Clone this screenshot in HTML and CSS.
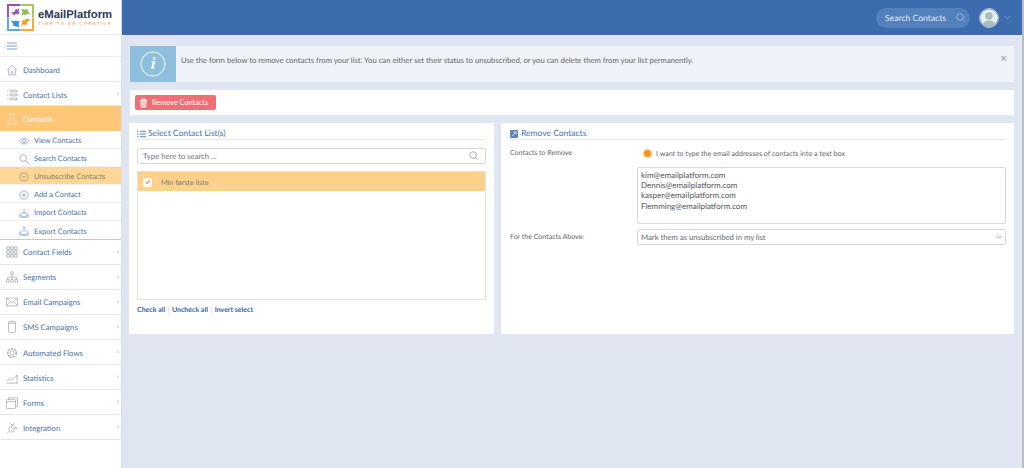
FILE: index.html
```html
<!DOCTYPE html>
<html lang="en">
<head>
<meta charset="utf-8">
<title>eMailPlatform - Remove Contacts</title>
<link rel="stylesheet" href="styles.css">
</head>
<body>
<div class="app">
  <aside class="sidebar">
    <div class="logo">
      <div class="logo-mark">
        <svg viewBox="0 0 28 28" width="27" height="27">
          <path d="M14 1H1V14" fill="none" stroke="#a04fb0" stroke-width="2"/>
          <path d="M14 1H27V14" fill="none" stroke="#9ccc5a" stroke-width="2"/>
          <path d="M1 14V27H14" fill="none" stroke="#5aa6e0" stroke-width="2"/>
          <path d="M27 14V27H14" fill="none" stroke="#f7a73c" stroke-width="2"/>
          <path d="M4 9l4-1 1-3 2 1 2-2-1 4 1 3-4-1-2 2-1-2z" fill="#a04fb0"/>
          <path d="M24 11l-4-1-1 2-2-1-2 1 1-4-1-3 4 1 2-1 1 3z" fill="#8cc152"/>
          <path d="M4 17l4 1 1-1 2 1 2-1-1 4 1 3-4-1-2 0-1-3z" fill="#3f8fd2"/>
          <path d="M24 16l-3 3-1 3-3-1-3 3 2-5-1-2 3 0 2-2z" fill="#f39a2d"/>
        </svg>
      </div>
      <div class="logo-text">
        <div class="logo-name">eMailPlatform</div>
        <div class="logo-tag">TIME TO BE CREATIVE</div>
      </div>
    </div>
    <div class="toggle">
      <svg viewBox="0 0 14 8" width="14" height="8"><path d="M3 1h10M3 4h10M3 7h10" stroke="#a9c1e2" stroke-width="1.400" fill="none"/><path d="M1.500 2.500L.2 4l1.300 1.500" stroke="#cfd8e6" stroke-width=".6" fill="none"/></svg>
    </div>
    <nav>
      <a class="nav-item lowered"><svg class="ni" viewBox="0 0 14 14"><path d="M1 7l6-5.500 6 5.500M3 6v7h3V9h2v4h3V6"/></svg><span>Dashboard</span></a>
      <a class="nav-item short lowered"><svg class="ni" viewBox="0 0 14 14"><path d="M1 2.500h2M1 7h2M1 11.500h2M5 1.500h8v2H5zM5 6h8v2H5zM5 10.500h8v2H5z"/></svg><span>Contact Lists</span><i class="chev">›</i></a>
      <a class="nav-item active lowered"><svg class="ni" viewBox="0 0 14 14"><path d="M5 7C3 3 5 1 7 1s4 2 2 6v1.500l4 2V13H1v-2.500l4-2z"/></svg><span>Contacts</span><svg class="chev-d" viewBox="0 0 6 4"><path d="M.5.5L3 3 5.500.5"/></svg></a>
      <div class="subnav">
        <a class="sub-item"><svg class="si" viewBox="0 0 12 12"><path d="M.5 6C2 3.500 4 2.500 6 2.500S10 3.500 11.500 6C10 8.500 8 9.500 6 9.500S2 8.500.5 6z"/><circle cx="6" cy="6" r="2"/></svg><span>View Contacts</span></a>
        <a class="sub-item"><svg class="si" viewBox="0 0 12 12"><circle cx="5" cy="5" r="4"/><path d="M8 8l3.500 3.500"/></svg><span>Search Contacts</span></a>
        <a class="sub-item current"><svg class="si" viewBox="0 0 12 12"><circle cx="6" cy="6" r="5"/><path d="M3.500 6h5"/></svg><span>Unsubscribe Contacts</span></a>
        <a class="sub-item"><svg class="si" viewBox="0 0 12 12"><circle cx="6" cy="6" r="5"/><path d="M3.500 6h5M6 3.500v5"/></svg><span>Add a Contact</span></a>
        <a class="sub-item"><svg class="si" viewBox="0 0 12 12"><path d="M3.500 5L1 8v3h10V8L8.500 5M1 8l5 3 5-3M6 1v6M4 5l2 2 2-2"/></svg><span>Import Contacts</span></a>
        <a class="sub-item"><svg class="si" viewBox="0 0 12 12"><path d="M3.500 5L1 8v3h10V8L8.500 5M1 8l5 3 5-3M6 7V1M4 3l2-2 2 2"/></svg><span>Export Contacts</span></a>
      </div>
      <a class="nav-item"><svg class="ni" viewBox="0 0 14 14"><path d="M1 1h3v3H1zM5.500 1h3v3h-3zM10 1h3v3h-3zM1 5.500h3v3H1zM5.500 5.500h3v3h-3zM10 5.500h3v3h-3zM1 10h3v3H1zM5.500 10h3v3h-3zM10 10h3v3h-3z"/></svg><span>Contact Fields</span><i class="chev">›</i></a>
      <a class="nav-item"><svg class="ni" viewBox="0 0 14 14"><path d="M5.500 1h3v3h-3zM7 4v3M2 10V7h10v3M7 7v3M.5 10h3v3h-3zM5.500 10h3v3h-3zM10.500 10h3v3h-3z"/></svg><span>Segments</span><i class="chev">›</i></a>
      <a class="nav-item"><svg class="ni" viewBox="0 0 14 14"><path d="M.5 2.500h13v9H.5zM.5 2.500L7 8l6.500-5.500M.5 11.500L5 6.500M13.500 11.500L9 6.500"/></svg><span>Email Campaigns</span><i class="chev">›</i></a>
      <a class="nav-item"><svg class="ni" viewBox="0 0 14 14"><rect x="3" y=".5" width="8" height="13" rx="1.500"/><path d="M3 2.500h8"/></svg><span>SMS Campaigns</span><i class="chev">›</i></a>
      <a class="nav-item lowered"><svg class="ni" viewBox="0 0 14 14"><circle cx="7" cy="7" r="2.500"/><circle cx="7" cy="7" r="5" stroke-dasharray="2.500 1.100" stroke-width="1.500"/></svg><span>Automated Flows</span><i class="chev">›</i></a>
      <a class="nav-item lowered"><svg class="ni" viewBox="0 0 14 14"><path d="M.5 13h13M1 11l3-3 2.500 1.500L13 4v9M13 4l-2 .5M13 4v2"/></svg><span>Statistics</span><i class="chev">›</i></a>
      <a class="nav-item lowered"><svg class="ni" viewBox="0 0 14 14"><rect x=".5" y="3" width="10.500" height="10.500" rx="1"/><path d="M3 3V1h10.500v10H11M.5 5.500H11"/></svg><span>Forms</span><i class="chev">›</i></a>
      <a class="nav-item lowered"><svg class="ni" viewBox="0 0 14 14"><path d="M1 13.500l3.500-3.500M5 5l5 5-2 1.500C6 12 4 11 3.500 9S3.500 6 5 5zM8 3L6 6M12 6l-3 2M9 1.500L7 5M10 8l3.500-1M4 1l5 4M10 5l3 3"/></svg><span>Integration</span><i class="chev">›</i></a>
    </nav>
  </aside>
  <div class="main">
    <header class="topbar">
      <div class="top-search">
        <span>Search Contacts</span>
        <svg viewBox="0 0 10 10" width="9" height="9"><circle cx="4.500" cy="4.500" r="3.700"/><path d="M7.200 7.200L9.500 9.500"/></svg>
      </div>
      <div class="avatar">
        <svg viewBox="0 0 18 18" width="18" height="18"><circle cx="9" cy="9" r="9" fill="#e7eef0"/><circle cx="9" cy="7" r="3.800" fill="#a9c0ba"/><path d="M2.500 18c0-5 3-6.500 6.500-6.500s6.500 1.500 6.500 6.500z" fill="#a9c0ba"/></svg>
      </div>
      <svg class="top-chev" viewBox="0 0 8 5" width="7" height="5"><path d="M.5.5L4 4 7.500.5"/></svg>
    </header>
    <main class="content">
      <div class="alert">
        <div class="alert-icon">
          <svg viewBox="0 0 26 26" width="26" height="26"><circle cx="13" cy="13" r="12" fill="none" stroke="#fff" stroke-width="1"/></svg>
          <span class="alert-i">i</span>
        </div>
        <p class="alert-text">Use the form below to remove contacts from your list. You can either set their status to unsubscribed, or you can delete them from your list permanently.</p>
        <span class="alert-close">×</span>
      </div>
      <div class="toolbar">
        <button class="btn-danger" type="button">
          <svg viewBox="0 0 10 11" width="9" height="10"><path d="M1 2.500h8M3.500 2.500V1h3v1.500M2 2.500l.5 8h5l.5-8z" fill="#f9c6c8" stroke="#fff" stroke-width=".8"/></svg>
          <span>Remove Contacts</span>
        </button>
      </div>
      <div class="panels">
        <section class="panel panel-left">
          <h2 class="panel-title">
            <svg viewBox="0 0 10 8" width="9" height="8"><path d="M0 1h1.500M0 4h1.500M0 7h1.500M3 1h7M3 4h7M3 7h7" stroke="#4a78b8" fill="none"/></svg>
            <span>Select Contact List(s)</span>
          </h2>
          <div class="search-box">
            <span>Type here to search ...</span>
            <svg viewBox="0 0 10 10" width="9" height="9"><circle cx="4.500" cy="4.500" r="3.700"/><path d="M7.200 7.200L9.500 9.500"/></svg>
          </div>
          <div class="list-box">
            <div class="list-row">
              <span class="check"><svg viewBox="0 0 8 8" width="6" height="6"><path d="M1 4l2 2 4-4.500" fill="none" stroke="#f0932b" stroke-width="1.600"/></svg></span>
              <span>Min første liste</span>
            </div>
          </div>
          <div class="list-links">
            <a>Check all</a><i>|</i><a>Uncheck all</a><i>|</i><a>Invert select</a>
          </div>
        </section>
        <section class="panel panel-right">
          <h2 class="panel-title">
            <svg viewBox="0 0 9 9" width="8" height="8"><rect width="9" height="9" rx="1" fill="#5b86bf"/><path d="M2 7l4.500-4.500M4 2.200h2.800V5" stroke="#fff" fill="none" stroke-width=".9"/></svg>
            <span>Remove Contacts</span>
          </h2>
          <div class="form-row row-radio">
            <label class="form-label">Contacts to Remove</label>
            <div class="radio-line"><span class="radio"></span><span>I want to type the email addresses of contacts into a text box</span></div>
          </div>
          <div class="form-row row-area">
            <span class="form-label"></span>
            <div class="textarea">kim@emailplatform.com<br>Dennis@emailplatform.com<br>kasper@emailplatform.com<br>Flemming@emailplatform.com</div>
          </div>
          <div class="form-row row-select">
            <label class="form-label">For the Contacts Above:</label>
            <div class="select">
              <span>Mark them as unsubscribed in my list</span>
              <svg viewBox="0 0 8 5" width="6" height="4"><path d="M.5.5L4 4 7.500.5"/></svg>
            </div>
          </div>
        </section>
      </div>
    </main>
  </div>
</div>
</body>
</html>
```

FILE: styles.css
```css
* { box-sizing: border-box; }
html, body { margin: 0; padding: 0; height: 100%; overflow: hidden; }
body { font-family: Lato, "Open Sans", "Liberation Sans", sans-serif; font-size: 8px; color: #5f6670; background: #fff; text-rendering: geometricPrecision; }
.app { display: flex; width: 1024px; height: 468px; }

/* sidebar */
.sidebar { width: 122px; flex: none; background: #fff; border-right: 1px solid #d8dfea; }
.logo { height: 35px; display: flex; align-items: center; padding-left: 7px; gap: 4px; border-bottom: 1px solid #e9ecf1; }
.logo-mark { width: 27px; height: 27px; }
.logo-mark svg { display: block; }
.logo-text { padding-top: 2px; }
.logo-name { font-family: "Liberation Sans", sans-serif; font-weight: 700; font-size: 11.300px; line-height: 11px; color: #2b3a55; }
.logo-tag { font-family: "Liberation Sans", sans-serif; font-size: 4.300px; line-height: 6px; letter-spacing: 1.450px; color: #f19a2e; white-space: nowrap; }
.toggle { height: 22px; display: flex; align-items: center; padding-left: 4px; border-bottom: 1px solid #e9ecf1; }
.nav-item { height: 25px; display: flex; align-items: center; padding-left: 6px; border-bottom: 1px solid #e4e7ec; color: #4a6fa5; font-size: 7.750px; position: relative; }
.nav-item.short { height: 24px; }
.nav-item.lowered { padding-top: 2px; }
.nav-item span { margin-left: 5px; }
.ni { width: 12px; height: 12px; flex: none; fill: none; stroke: #9aa3ad; stroke-width: .8; }
.chev { position: absolute; right: 2px; top: 6px; font-style: normal; color: #a9b4c4; font-size: 8px; }
.chev-d { position: absolute; right: 2px; top: 11px; width: 5px; height: 4px; fill: none; stroke: #fdd9a8; stroke-width: .8; }
.nav-item.active { background: #fec679; color: #fff; border-bottom-color: #fec679; }
.nav-item.active .ni { stroke: #fff; stroke-opacity: .75; }
.subnav { border-bottom: 1px solid #d9c8ae; }
.sub-item { height: 18px; display: flex; align-items: center; padding: 2px 0 0 19px; border-bottom: 1px solid #eef0f3; color: #4a6fa5; font-size: 7.450px; }
.sub-item:last-child { border-bottom: 0; }
.sub-item span { margin-left: 5px; }
.si { width: 10px; height: 10px; flex: none; fill: none; stroke: #6d8dbb; stroke-width: .75; }
.sub-item.current { background: #fdd796; color: #8a7d68; }
.sub-item.current .si { stroke: #8f8672; }

/* main */
.main { flex: 1; min-width: 0; display: flex; flex-direction: column; background: #dfe6f1; border-right: 2px solid #b9bcc2; }
.topbar { height: 35px; flex: none; background: #3c6bae; display: flex; align-items: center; justify-content: flex-end; padding-right: 11px; }
.top-search { width: 94px; height: 20px; border-radius: 10px; background: #5480bd; color: #e3ebf5; font-size: 8.600px; display: flex; align-items: center; justify-content: space-between; padding: 0 5px 0 9px; margin-right: 9px; }
.top-search svg { fill: none; stroke: #a9c2e2; stroke-width: .8; }
.avatar { width: 20px; height: 20px; border-radius: 50%; border: 1px solid #a9c2e2; overflow: hidden; }
.avatar svg { display: block; }
.top-chev { margin-left: 5px; fill: none; stroke: #8fafd8; stroke-width: .8; }
.content { flex: 1; padding: 11px 8px 0 7px; }

.alert { height: 36px; margin-left: 1px; display: flex; align-items: center; background: #eff2f8; position: relative; }
.alert-icon { width: 46px; height: 36px; background: #8fbfdf; display: flex; align-items: center; justify-content: center; position: relative; flex: none; }
.alert-i { position: absolute; left: 0; right: 0; top: 6px; text-align: center; color: #fff; font-family: "Liberation Serif", serif; font-weight: 700; font-style: italic; font-size: 17px; line-height: 24px; }
.alert-text { margin: -8px 0 0 5px; font-size: 7.700px; color: #5f6670; }
.alert-close { position: absolute; right: 7px; top: 6px; color: #a4a9b0; font-size: 11px; line-height: 14px; font-weight: 700; }

.toolbar { margin-top: 8px; margin-left: 1px; height: 25px; background: #fff; display: flex; align-items: center; padding-left: 5px; }
.btn-danger { height: 15px; width: 81px; border: 0; padding: 0 0 0 4px; border-radius: 2px; background: #ee6f75; color: #fff; font-family: inherit; font-size: 7.300px; display: flex; align-items: center; gap: 4px; }

.panels { display: flex; gap: 7px; margin-top: 8px; }
.panel { background: #fff; height: 211px; padding: 5px 8px 0; }
.panel-left { width: 365px; }
.panel-right { flex: 1; padding-left: 9px; }
.panel-title { margin: 0; height: 12px; border-bottom: 1px solid #e5ebf3; display: flex; align-items: center; gap: 3px; font-size: 8.500px; font-weight: 400; color: #3f72b5; line-height: 11px; }
.panel-left .panel-title { gap: 2px; }

.search-box { margin-top: 8px; height: 16px; border: 1px solid #d5d8dc; border-radius: 2px; display: flex; align-items: center; justify-content: space-between; padding: 0 7px 1px 5px; font-size: 7.700px; color: #6d737b; }
.search-box svg { fill: none; stroke: #8a9199; stroke-width: .8; }
.list-box { margin-top: 7px; height: 129px; border: 1px solid #dfe2e6; }
.list-row { height: 19px; background: #fdd18a; display: flex; align-items: center; padding: 1px 0 0 5px; gap: 9px; font-size: 7.200px; color: #7d7a70; }
.check { width: 9px; height: 9px; border-radius: 2px; background: #fff; display: flex; align-items: center; justify-content: center; }
.list-links { margin-top: 6px; font-size: 7px; font-weight: 700; color: #34629f; display: flex; align-items: center; }
.list-links i { font-style: normal; font-weight: 400; color: #c5c9cf; margin: 0 2.500px; }

.form-row { display: flex; }
.form-label { width: 127px; flex: none; font-size: 7px; color: #5f6670; }
.row-radio { margin-top: 7px; height: 12px; align-items: center; }
.radio-line { display: flex; align-items: center; gap: 5px; padding-left: 7px; font-size: 7.100px; color: #5f6670; }
.radio { width: 7px; height: 7px; border-radius: 50%; background: #f7941e; box-shadow: 0 0 0 1.500px #fcdcb5; }
.row-area { margin-top: 8px; }
.textarea { flex: 1; height: 57px; border: 1px solid #d5d8dc; border-radius: 2px; padding: 2px 3px; font-size: 8px; line-height: 10.200px; color: #4f555d; }
.row-select { margin-top: 5px; align-items: center; }
.select { flex: 1; height: 16px; border: 1px solid #d5d8dc; border-radius: 2px; display: flex; align-items: center; justify-content: space-between; padding: 0 3px 1px 3px; font-size: 7.700px; color: #5f6670; }
.select svg { fill: none; stroke: #8a9199; stroke-width: 1; }
```
